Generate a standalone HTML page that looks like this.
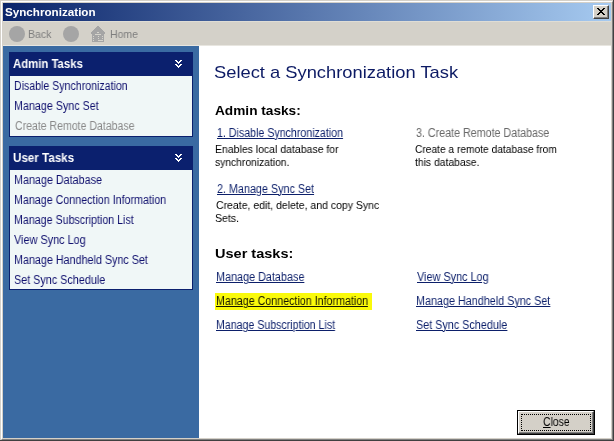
<!DOCTYPE html>
<html><head><meta charset="utf-8">
<style>
*{margin:0;padding:0;box-sizing:border-box}
html,body{width:614px;height:441px;overflow:hidden;background:#d4d0c8;font-family:"Liberation Sans",sans-serif;font-size:11px}
.a{position:absolute}
.t{position:absolute;white-space:nowrap;line-height:1.2;transform-origin:0 0;will-change:transform}
</style></head><body>
<!--STATIC-->
<div class="a" style="left:0;top:0;width:614px;height:441px;background:#d4d0c8;border-right:1px solid #404040;border-bottom:1px solid #404040"></div>
<div class="a" style="left:1px;top:1px;width:612px;height:439px;border-top:1px solid #fff;border-left:1px solid #fff;border-right:1px solid #808080;border-bottom:1px solid #808080"></div>
<div class="a" style="left:3px;top:3px;width:608px;height:18px;background:linear-gradient(to right,#0a246a,#a6caf0)"></div>
<div class="a" style="left:593px;top:5px;width:16px;height:14px;background:#d4d0c8;border-top:1px solid #fff;border-left:1px solid #fff;border-right:1px solid #404040;border-bottom:1px solid #404040"></div>
<div class="a" style="left:594px;top:6px;width:14px;height:12px;border-right:1px solid #808080;border-bottom:1px solid #808080"></div>
<svg class="a" style="left:597px;top:8px" width="8" height="7" viewBox="0 0 8 7" shape-rendering="crispEdges"><path d="M0 0h2v1h1v1h2v-1h1v-1h2v1h-1v1h-1v1h-1v1h1v1h1v1h1v1h-2v-1h-1v-1h-2v1h-1v1h-2v-1h1v-1h1v-1h1v-1h-1v-1h-1v-1h-1z" fill="#000"/></svg>
<div class="a" style="left:3px;top:21px;width:608px;height:25px;background:#d4d1c9;border-top:1px solid #dfddd5;border-bottom:1px solid #e8e6e0"></div>
<div class="a" style="left:9px;top:26px;width:16px;height:16px;border-radius:50%;background:#a5a5a5"></div>
<div class="a" style="left:63px;top:26px;width:16px;height:16px;border-radius:50%;background:#a5a5a5"></div>
<svg class="a" style="left:91px;top:26px" width="14" height="16" viewBox="0 0 14 16" shape-rendering="crispEdges"><path d="M6 0h2v1h-2zM5 1h4v1h-4zM4 2h6v1h-6zM3 3h8v1h-8zM2 4h10v1h-10zM1 5h12v1h-12zM0 6h14v1h-14zM0 7h14v1h-14zM1 8h12v1h-12zM1 9h12v1h-12zM1 10h12v1h-12zM1 11h12v1h-12zM1 12h12v1h-12zM1 13h12v1h-12zM1 14h12v1h-12zM1 15h12v1h-12z" fill="#a5a5a5"/><path d="M6 6h2v1h-2zM4 8h6v1h-6zM2 10h1v1h-1zM7 10h1v1h-1zM11 10h1v1h-1zM2 12h1v1h-1zM7 12h1v1h-1zM11 12h1v1h-1zM2 14h1v1h-1zM7 14h5v1h-5z" fill="#d6d4cc"/></svg>
<div class="a" style="left:3px;top:46px;width:196px;height:392px;background:#3a6aa2"></div>
<div class="a" style="left:9px;top:52px;width:184px;height:24px;background:#0b206e"></div>
<div class="a" style="left:9px;top:76px;width:184px;height:61px;background:#f0f7f7;border:1px solid #0b206e;border-top:none"></div>
<div class="a" style="left:9px;top:146px;width:184px;height:24px;background:#0b206e"></div>
<div class="a" style="left:9px;top:170px;width:184px;height:120px;background:#f0f7f7;border:1px solid #0b206e;border-top:none"></div>
<svg class="a" style="left:175px;top:60px" width="7" height="8" viewBox="0 0 7 8" shape-rendering="crispEdges"><path d="M0 0h2v1h-2zM5 0h2v1h-2zM1 1h2v1h-2zM4 1h2v1h-2zM2 2h3v1h-3zM3 3h1v1h-1zM0 4h2v1h-2zM5 4h2v1h-2zM1 5h2v1h-2zM4 5h2v1h-2zM2 6h3v1h-3zM3 7h1v1h-1z" fill="#fff"/></svg>
<svg class="a" style="left:175px;top:154px" width="7" height="8" viewBox="0 0 7 8" shape-rendering="crispEdges"><path d="M0 0h2v1h-2zM5 0h2v1h-2zM1 1h2v1h-2zM4 1h2v1h-2zM2 2h3v1h-3zM3 3h1v1h-1zM0 4h2v1h-2zM5 4h2v1h-2zM1 5h2v1h-2zM4 5h2v1h-2zM2 6h3v1h-3zM3 7h1v1h-1z" fill="#fff"/></svg>
<div class="a" style="left:199px;top:46px;width:412px;height:392px;background:#fff"></div>
<div class="a" style="left:215px;top:293px;width:157px;height:17px;background:#fafa0a"></div>
<div class="a" style="left:517px;top:410px;width:78px;height:25px;border:1px solid #000;background:#d4d0c8"></div>
<div class="a" style="left:518px;top:411px;width:76px;height:23px;border-top:1px solid #fff;border-left:1px solid #fff;border-right:1px solid #404040;border-bottom:1px solid #404040"></div>
<div class="a" style="left:519px;top:412px;width:74px;height:21px;border-right:1px solid #808080;border-bottom:1px solid #808080"></div>
<div class="a" style="left:521px;top:414px;width:70px;height:17px;border:1px dotted #000"></div>
<!--/STATIC-->
<div id="ttl" class="t" style="left:5.00px;top:6.00px;font-size:11px;font-weight:bold;color:#ffffff;transform:scaleX(1.0588);">Synchronization</div>
<div id="back" class="t" style="left:28.25px;top:28.00px;font-size:11px;font-weight:normal;color:#7e7e7e;transform:scaleX(0.9588);">Back</div>
<div id="home" class="t" style="left:109.61px;top:28.00px;font-size:11px;font-weight:normal;color:#7e7e7e;transform:scaleX(0.9523);">Home</div>
<div id="sh1" class="t" style="left:13.00px;top:57.00px;font-size:12px;font-weight:bold;color:#ffffff;transform:scaleX(0.9459);">Admin Tasks</div>
<div id="s1" class="t" style="left:14.15px;top:79.00px;font-size:12px;font-weight:normal;color:#10106e;transform:scaleX(0.8822);">Disable Synchronization</div>
<div id="s2" class="t" style="left:14.13px;top:99.00px;font-size:12px;font-weight:normal;color:#10106e;transform:scaleX(0.8933);">Manage Sync Set</div>
<div id="s3" class="t" style="left:15.06px;top:119.00px;font-size:12px;font-weight:normal;color:#8a8a8a;transform:scaleX(0.8778);">Create Remote Database</div>
<div id="sh2" class="t" style="left:13.06px;top:151.00px;font-size:12px;font-weight:bold;color:#ffffff;transform:scaleX(0.9678);">User Tasks</div>
<div id="u1" class="t" style="left:14.10px;top:173.00px;font-size:12px;font-weight:normal;color:#10106e;transform:scaleX(0.8969);">Manage Database</div>
<div id="u2" class="t" style="left:14.11px;top:193.00px;font-size:12px;font-weight:normal;color:#10106e;transform:scaleX(0.8909);">Manage Connection Information</div>
<div id="u3" class="t" style="left:14.12px;top:213.00px;font-size:12px;font-weight:normal;color:#10106e;transform:scaleX(0.8881);">Manage Subscription List</div>
<div id="u4" class="t" style="left:14.00px;top:233.00px;font-size:12px;font-weight:normal;color:#10106e;transform:scaleX(0.9050);">View Sync Log</div>
<div id="u5" class="t" style="left:14.12px;top:253.00px;font-size:12px;font-weight:normal;color:#10106e;transform:scaleX(0.8956);">Manage Handheld Sync Set</div>
<div id="u6" class="t" style="left:14.13px;top:273.00px;font-size:12px;font-weight:normal;color:#10106e;transform:scaleX(0.9000);">Set Sync Schedule</div>
<div id="mt" class="t" style="left:213.92px;top:63.00px;font-size:17px;font-weight:normal;color:#0c1a64;transform:scaleX(1.0778);">Select a Synchronization Task</div>
<div id="ah" class="t" style="left:214.60px;top:103.00px;font-size:13px;font-weight:bold;color:#000000;transform:scaleX(1.0500);">Admin tasks:</div>
<div id="l1" class="t" style="left:217.11px;top:126.00px;font-size:12px;font-weight:normal;color:#0c1f6a;transform:scaleX(0.8865);text-decoration:underline;text-underline-offset:1px;text-decoration-thickness:1px;">1. Disable Synchronization</div>
<div id="d1a" class="t" style="left:215.04px;top:143.00px;font-size:11px;font-weight:normal;color:#000000;transform:scaleX(0.9535);">Enables local database for</div>
<div id="d1b" class="t" style="left:215.05px;top:156.00px;font-size:11px;font-weight:normal;color:#000000;transform:scaleX(0.9361);">synchronization.</div>
<div id="l3" class="t" style="left:415.88px;top:126.00px;font-size:12px;font-weight:normal;color:#686868;transform:scaleX(0.8919);">3. Create Remote Database</div>
<div id="d3a" class="t" style="left:415.44px;top:143.00px;font-size:11px;font-weight:normal;color:#000000;transform:scaleX(0.9276);">Create a remote database from</div>
<div id="d3b" class="t" style="left:415.41px;top:156.00px;font-size:11px;font-weight:normal;color:#000000;transform:scaleX(0.9409);">this database.</div>
<div id="l2" class="t" style="left:216.81px;top:182.00px;font-size:12px;font-weight:normal;color:#0c1f6a;transform:scaleX(0.8983);text-decoration:underline;text-underline-offset:1px;text-decoration-thickness:1px;">2. Manage Sync Set</div>
<div id="d2a" class="t" style="left:216.04px;top:199.00px;font-size:11px;font-weight:normal;color:#000000;transform:scaleX(0.9533);">Create, edit, delete, and copy Sync</div>
<div id="d2b" class="t" style="left:215.05px;top:212.00px;font-size:11px;font-weight:normal;color:#000000;transform:scaleX(0.9599);">Sets.</div>
<div id="uh" class="t" style="left:215.49px;top:246.00px;font-size:13px;font-weight:bold;color:#000000;transform:scaleX(1.1176);">User tasks:</div>
<div id="m1" class="t" style="left:216.37px;top:270.00px;font-size:12px;font-weight:normal;color:#0c1f6a;transform:scaleX(0.9013);text-decoration:underline;text-underline-offset:1px;text-decoration-thickness:1px;">Manage Database</div>
<div id="m2" class="t" style="left:216.34px;top:294.00px;font-size:12px;font-weight:normal;color:#141400;transform:scaleX(0.8909);text-decoration:underline;text-underline-offset:1px;text-decoration-thickness:1px;">Manage Connection Information</div>
<div id="m3" class="t" style="left:216.39px;top:318.00px;font-size:12px;font-weight:normal;color:#0c1f6a;transform:scaleX(0.8833);text-decoration:underline;text-underline-offset:1px;text-decoration-thickness:1px;">Manage Subscription List</div>
<div id="m4" class="t" style="left:417.23px;top:270.00px;font-size:12px;font-weight:normal;color:#0c1f6a;transform:scaleX(0.9044);text-decoration:underline;text-underline-offset:1px;text-decoration-thickness:1px;">View Sync Log</div>
<div id="m5" class="t" style="left:416.35px;top:294.00px;font-size:12px;font-weight:normal;color:#0c1f6a;transform:scaleX(0.8984);text-decoration:underline;text-underline-offset:1px;text-decoration-thickness:1px;">Manage Handheld Sync Set</div>
<div id="m6" class="t" style="left:416.35px;top:318.00px;font-size:12px;font-weight:normal;color:#0c1f6a;transform:scaleX(0.9000);text-decoration:underline;text-underline-offset:1px;text-decoration-thickness:1px;">Set Sync Schedule</div>
<div id="cl" class="t" style="left:543.48px;top:415.00px;font-size:12px;font-weight:normal;color:#000000;transform:scaleX(0.8667);"><span style="text-decoration:underline;text-underline-offset:1px">C</span>lose</div>
</body></html>
